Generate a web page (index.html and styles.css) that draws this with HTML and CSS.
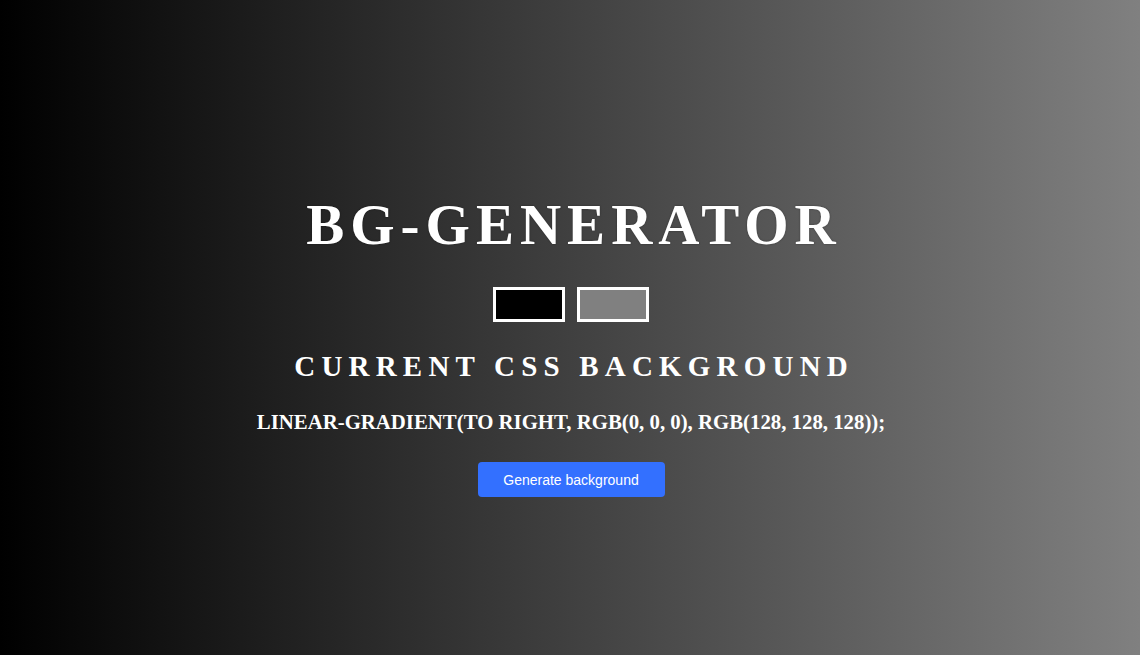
FILE: index.html
```html
<!DOCTYPE html>
<html lang="en">
<head>
<meta charset="utf-8">
<title>Background Generator</title>
<link rel="stylesheet" href="styles.css">
</head>
<body>
  <main class="generator">
    <h1 class="title">BG-GENERATOR</h1>
    <div class="pickers">
      <span class="swatch swatch-black"></span>
      <span class="swatch swatch-grey"></span>
    </div>
    <h2 class="subtitle">Current CSS Background</h2>
    <h3 class="css-value">linear-gradient(to right, rgb(0, 0, 0), rgb(128, 128, 128));</h3>
    <button class="generate" type="button">Generate background</button>
  </main>
</body>
</html>
```

FILE: styles.css
```css
html, body {
  margin: 0;
  height: 100%;
}

body {
  background: linear-gradient(to right, rgb(0, 0, 0), rgb(128, 128, 128));
  font-family: "Liberation Serif", "Times New Roman", serif;
  color: #fff;
  text-transform: uppercase;
}

.generator {
  display: flex;
  flex-direction: column;
  align-items: center;
  padding: 192px 0 0 2px;
  text-align: center;
}

.title {
  margin: 0;
  font-size: 57px;
  font-weight: bold;
  letter-spacing: 6px;
  text-indent: 6px;
  line-height: 66px;
  text-shadow: 0 0 2px rgba(0, 0, 0, 0.4);
}

.pickers {
  display: flex;
  gap: 12px;
  margin-top: 29px;
}

.swatch {
  width: 66px;
  height: 29px;
  border: 3px solid #fff;
  display: block;
}

.swatch-black { background: #000; }
.swatch-grey { background: #808080; }

.subtitle {
  margin: 26px 0 0;
  font-size: 29px;
  font-weight: bold;
  letter-spacing: 6.2px;
  text-indent: 6.2px;
  line-height: 36px;
}

.css-value {
  margin: 24px 0 0;
  font-size: 20.8px;
  font-weight: bold;
  line-height: 28px;
}

.generate {
  margin-top: 26px;
  width: 187px;
  height: 35px;
  border: none;
  border-radius: 4px;
  background: #3370ff;
  color: #fff;
  font-family: "Liberation Sans", Arial, sans-serif;
  font-size: 14px;
  text-transform: none;
  cursor: pointer;
}
```
